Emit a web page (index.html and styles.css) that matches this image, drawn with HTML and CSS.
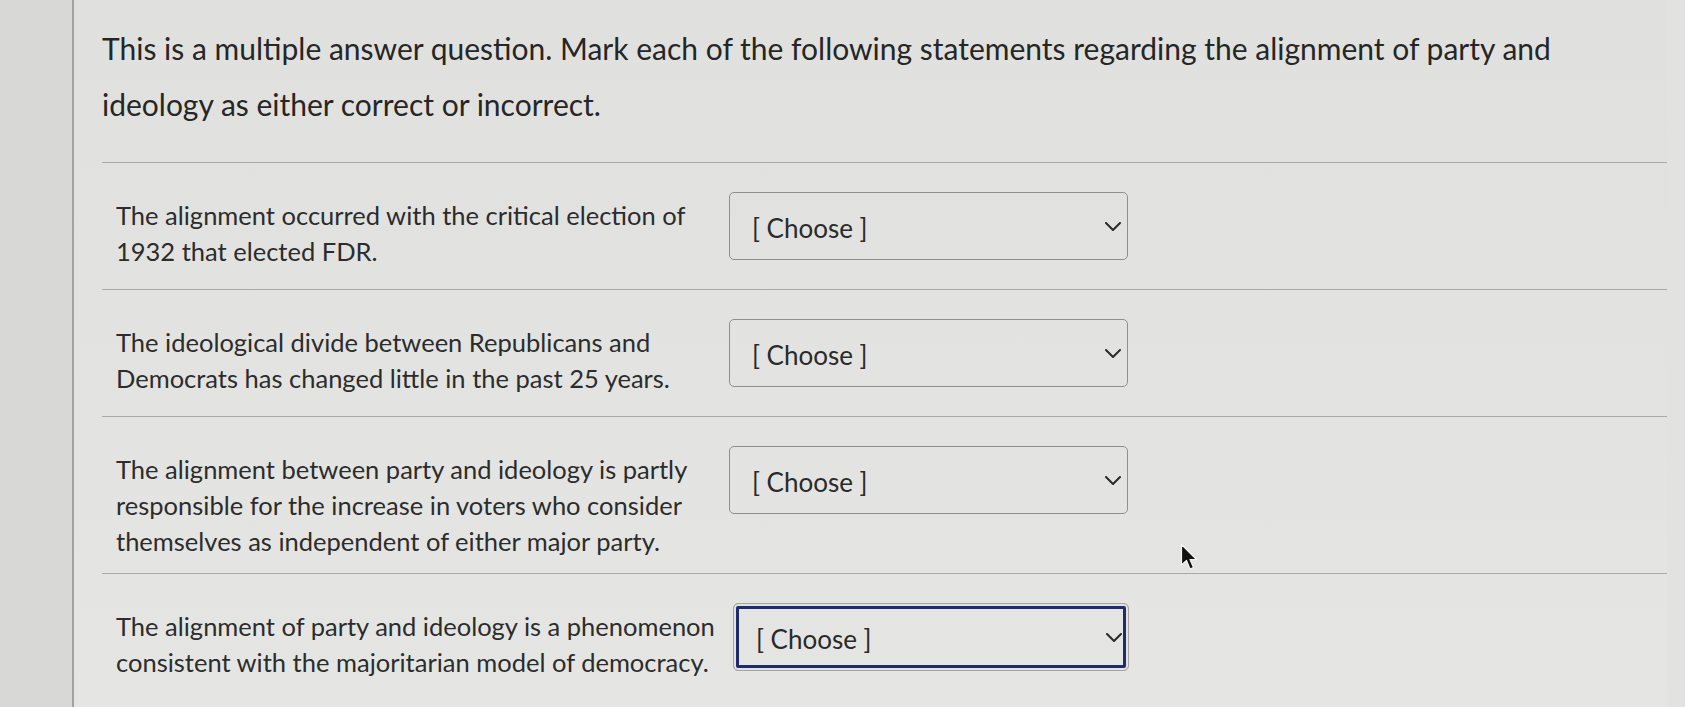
FILE: index.html
```html
<!DOCTYPE html>
<html lang="en">
<head>
<meta charset="utf-8">
<title>Multiple answer question</title>
<link rel="stylesheet" href="styles.css">
</head>
<body>
<div class="page">
  <aside class="gutter"></aside>
  <main class="content">
    <p class="prompt">This is a multiple answer question. Mark each of the following statements regarding the alignment of party and<br>ideology as either correct or incorrect.</p>

    <div class="qrow">
      <div class="stmt">The alignment occurred with the critical election of<br>1932 that elected FDR.</div>
      <div class="select"><span>[ Choose ]</span><svg class="chev" viewBox="0 0 16 9" width="16" height="9"><path d="M1 1 L8 8 L15 1" /></svg></div>
    </div>

    <div class="qrow">
      <div class="stmt">The ideological divide between Republicans and<br>Democrats has changed little in the past 25 years.</div>
      <div class="select"><span>[ Choose ]</span><svg class="chev" viewBox="0 0 16 9" width="16" height="9"><path d="M1 1 L8 8 L15 1" /></svg></div>
    </div>

    <div class="qrow">
      <div class="stmt">The alignment between party and ideology is partly<br>responsible for the increase in voters who consider<br>themselves as independent of either major party.</div>
      <div class="select"><span>[ Choose ]</span><svg class="chev" viewBox="0 0 16 9" width="16" height="9"><path d="M1 1 L8 8 L15 1" /></svg></div>
    </div>

    <div class="qrow qrow-last">
      <div class="stmt">The alignment of party and ideology is a phenomenon<br>consistent with the majoritarian model of democracy.</div>
      <div class="select select-focus"><span>[ Choose ]</span><svg class="chev" viewBox="0 0 16 9" width="16" height="9"><path d="M1 1 L8 8 L15 1" /></svg></div>
    </div>
  </main>
  <svg class="cursor" viewBox="0 0 18 28" width="18" height="28"><path d="M1.5 1.5 L1.5 22 L6.5 17.5 L10 26 L13.5 24.5 L10 16.5 L16.5 16.5 Z" /></svg>
</div>
</body>
</html>
```

FILE: styles.css
```css
html, body {
  margin: 0;
  padding: 0;
}

body {
  background: #e2e3e1;
  font-family: Lato, "Open Sans", "Liberation Sans", sans-serif;
  color: #2b2b2b;
}

.page {
  position: relative;
  display: flex;
  min-height: 707px;
  overflow: hidden;
}

.gutter {
  flex: 0 0 72px;
  background: #d8d9d7;
  border-right: 2px solid #a2a3a1;
}

.content {
  flex: 0 0 1565px;
  padding-left: 28px;
  background: linear-gradient(180deg, #e0e1df 0%, #e3e4e2 60%, #e5e6e4 100%);
}

.prompt {
  margin: 0 0 30px 0;
  padding-top: 20px;
  font-size: 30px;
  line-height: 56px;
  white-space: nowrap;
  color: #262626;
}

.qrow {
  display: grid;
  grid-template-columns: 613px 399px;
  align-items: start;
  border-top: 1px solid #aaaba9;
  padding: 29px 0 14px 14px;
}

.stmt {
  margin-top: 5px;
  font-size: 25.5px;
  line-height: 36px;
  white-space: nowrap;
  color: #2c2c2c;
}

.select {
  box-sizing: border-box;
  height: 68px;
  margin-bottom: 15px;
  border: 1px solid #8f908e;
  border-radius: 5px;
  display: flex;
  align-items: center;
  justify-content: space-between;
  padding: 0 6px 0 22px;
  font-size: 26px;
  color: #2a2a2a;
}

.select span {
  margin-top: 3px;
}

.select-focus {
  margin-left: 4px;
  width: 396px;
  box-shadow: inset 0 0 0 2px #e2e3e1, inset 0 0 0 5px #1f2c6c;
  border-color: #a5a6a4;
}

.chev {
  fill: none;
  stroke: #2a2a2a;
  stroke-width: 2;
  stroke-linecap: round;
  stroke-linejoin: round;
}

.cursor {
  position: absolute;
  left: 1180px;
  top: 543px;
}

.cursor path {
  fill: #111;
  stroke: #f4f4f4;
  stroke-width: 1.2;
  stroke-linejoin: round;
}
```
